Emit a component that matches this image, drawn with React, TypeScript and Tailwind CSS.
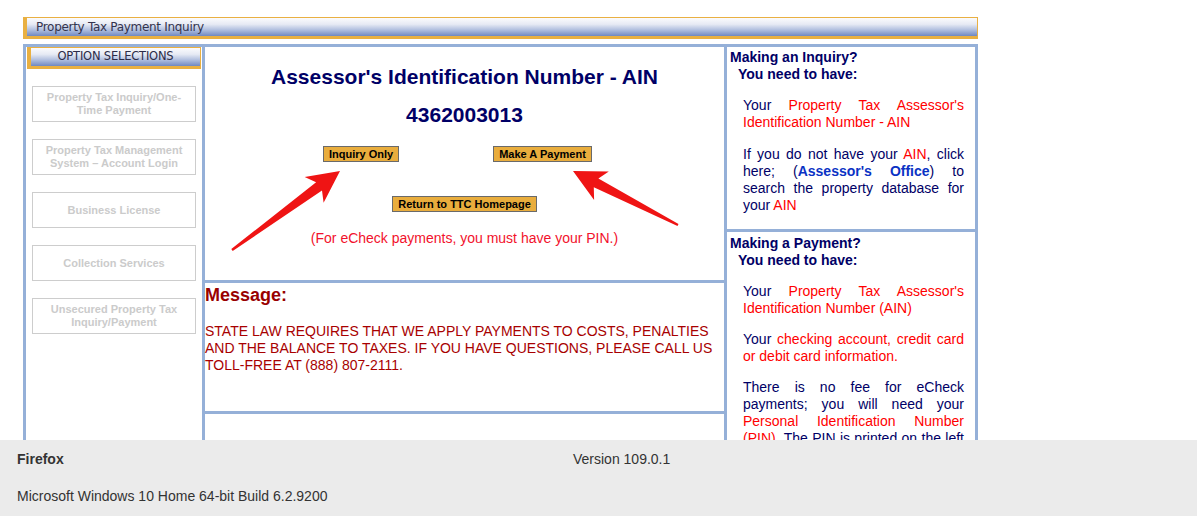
function arrow(tx: number, ty: number, hx: number, hy: number) {
  const dx = hx - tx;
  const dy = hy - ty;
  const len = Math.hypot(dx, dy);
  const ux = dx / len;
  const uy = dy / len;
  const px = -uy;
  const py = ux;
  const headLen = 32;
  const headW = 16;
  const joinBack = 26;
  const s0 = 1.2;
  const s1 = 5;
  const bx = hx - ux * headLen;
  const by = hy - uy * headLen;
  const jx = hx - ux * joinBack;
  const jy = hy - uy * joinBack;
  const pts = [
    [tx + px * s0, ty + py * s0],
    [jx + px * s1, jy + py * s1],
    [bx + px * headW, by + py * headW],
    [hx, hy],
    [bx - px * headW, by - py * headW],
    [jx - px * s1, jy - py * s1],
    [tx - px * s0, ty - py * s0],
  ];
  return pts.map((p) => p[0].toFixed(1) + "," + p[1].toFixed(1)).join(" ");
}

const sideLinks = [
  ["Property Tax Inquiry/One-", "Time Payment"],
  ["Property Tax Management", "System – Account Login"],
  ["Business License"],
  ["Collection Services"],
  ["Unsecured Property Tax", "Inquiry/Payment"],
];

function OrangeButton({ label }: { label: string }) {
  return (
    <span className="inline-block border border-[#6a6a6a] bg-[#e9ad3d] px-[5px] text-[11px] font-bold leading-[14px] text-black">
      {label}
    </span>
  );
}

export default function App() {
  return (
    <div className="bg-white font-['Liberation_Sans',Arial,sans-serif]">
      <div className="h-[440px] overflow-hidden pl-[23px] pt-[17px]">
        {/* page title bar */}
        <div className="flex h-[22px] w-[955px] items-center border-t border-r border-b-[3px] border-l-4 border-[#e9b042] bg-[linear-gradient(to_bottom,#fbfbfd_0%,#e6eaf4_35%,#a9b9dc_70%,#6f88c1_100%)] pl-[9px] font-['DejaVu_Sans',Tahoma,sans-serif] text-[12px] tracking-[-0.3px] text-[#34344e]">
          Property Tax Payment Inquiry
        </div>

        <div className="mt-[5px] flex w-[955px] gap-[3px] bg-[#95b0d8] p-[3px]">
          {/* left column */}
          <div className="h-[420px] w-[176px] bg-white">
            <div className="mx-px flex h-[22px] items-center justify-center border-t border-r border-b-[3px] border-l-4 border-[#e9b042] bg-[linear-gradient(to_bottom,#fbfbfd_0%,#e6eaf4_35%,#a9b9dc_70%,#6f88c1_100%)] font-['DejaVu_Sans',Tahoma,sans-serif] text-[11.5px] tracking-[-0.2px] text-[#2c2c48]">
              OPTION SELECTIONS
            </div>
            <div className="ml-[6px] mt-[17px] flex flex-col gap-[17px]">
              {sideLinks.map((lines) => (
                <div
                  key={lines[0]}
                  className="flex h-[36px] w-[164px] flex-col items-center justify-center border border-[#cdcdcd] text-center text-[11px] font-bold leading-[13px] text-[#cbcbcb]"
                >
                  {lines.map((l) => (
                    <span key={l}>{l}</span>
                  ))}
                </div>
              ))}
            </div>
          </div>

          {/* middle column */}
          <div className="flex w-[519px] flex-col gap-[3px]">
            <div className="relative h-[233px] bg-white">
              <div className="pt-[18px] text-center text-[21px] font-bold leading-[24px] text-[#000066]">
                Assessor's Identification Number - AIN
              </div>
              <div className="mt-[14px] text-center text-[21px] font-bold leading-[24px] text-[#000066]">
                4362003013
              </div>
              <div className="mt-[19px] flex gap-[94px] pl-[118px]">
                <OrangeButton label="Inquiry Only" />
                <OrangeButton label="Make A Payment" />
              </div>
              <div className="mt-[34px] flex justify-center">
                <OrangeButton label="Return to TTC Homepage" />
              </div>
              <div className="mt-[18px] text-center text-[14px] leading-[16px] text-[#f2122c]">
                (For eCheck payments, you must have your PIN.)
              </div>
              <svg
                className="pointer-events-none absolute left-0 top-0"
                width="519"
                height="233"
                viewBox="205 47 519 233"
              >
                <polygon points={arrow(232, 250, 340, 171)} fill="#ef1414" />
                <polygon points={arrow(678, 225, 573, 171)} fill="#ef1414" />
              </svg>
            </div>

            <div className="h-[128px] bg-white">
              <div className="pt-[2px] text-[18px] font-bold leading-[21px] text-[#990000]">Message:</div>
              <p className="mt-[17px] text-[14px] leading-[17px] text-[#a80000]">
                STATE LAW REQUIRES THAT WE APPLY PAYMENTS TO COSTS, PENALTIES AND THE BALANCE TO TAXES. IF
                YOU HAVE QUESTIONS, PLEASE CALL US TOLL-FREE AT (888) 807-2111.
              </p>
            </div>

            <div className="flex-1 bg-white" />
          </div>

          {/* right column */}
          <div className="flex w-[248px] flex-col gap-[3px] text-[14px] leading-[17px] text-[#000066]">
            <div className="h-[182px] bg-white pt-[2px]">
              <div className="pl-[3px] font-bold">Making an Inquiry?</div>
              <div className="pl-[11px] font-bold">You need to have:</div>
              <p className="mt-[14px] pl-[16px] pr-[11px] text-justify">
                Your <span className="text-[#ff0000]">Property Tax Assessor's Identification Number - AIN</span>
              </p>
              <p className="mt-[15px] pl-[16px] pr-[11px] text-justify">
                If you do not have your <span className="text-[#ff0000]">AIN</span>, click here; (
                <span className="font-bold text-[#0a32c4]">Assessor's Office</span>) to search the property
                database for your <span className="text-[#ff0000]">AIN</span>
              </p>
            </div>
            <div className="flex-1 bg-white pt-[3px]">
              <div className="pl-[3px] font-bold">Making a Payment?</div>
              <div className="pl-[11px] font-bold">You need to have:</div>
              <p className="mt-[14px] pl-[16px] pr-[11px] text-justify">
                Your <span className="text-[#ff0000]">Property Tax Assessor's Identification Number (AIN)</span>
              </p>
              <p className="mt-[14px] pl-[16px] pr-[11px] text-justify">
                Your <span className="text-[#ff0000]">checking account, credit card or debit card information.</span>
              </p>
              <p className="mt-[14px] pl-[16px] pr-[11px] text-justify">
                There is no fee for eCheck payments; you will need your{" "}
                <span className="text-[#ff0000]">Personal Identification Number (PIN)</span>. The PIN is printed
                on the left side of your bill.
              </p>
            </div>
          </div>
        </div>
      </div>

      {/* browser info bar */}
      <div className="h-[76px] bg-[#ebebeb] pl-[17px] pt-[11px] text-[14px] leading-[16px] text-[#333333]">
        <div className="flex">
          <span className="w-[556px] font-bold">Firefox</span>
          <span>Version 109.0.1</span>
        </div>
        <div className="mt-[21px]">Microsoft Windows 10 Home 64-bit Build 6.2.9200</div>
      </div>
    </div>
  );
}
